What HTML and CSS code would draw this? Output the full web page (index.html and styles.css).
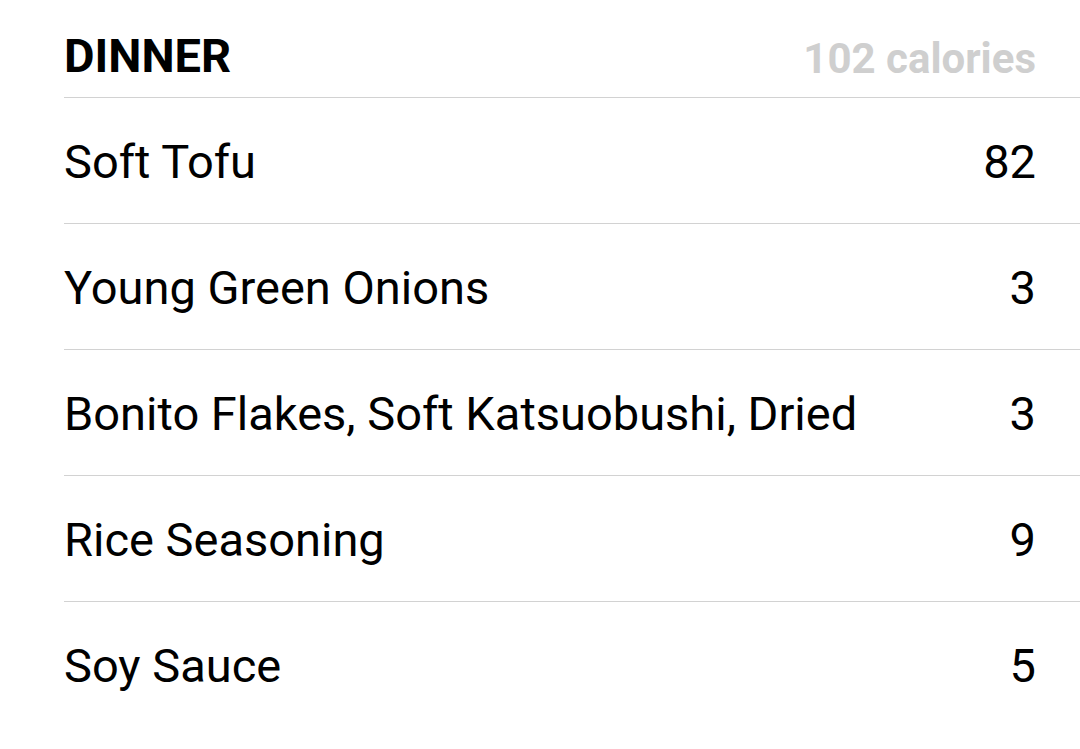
FILE: index.html
```html
<!DOCTYPE html>
<html>
<head>
<meta charset="utf-8">
<link rel="stylesheet" href="styles.css">
</head>
<body>
<div class="meal">
  <div class="meal-header">
    <span class="meal-title">DINNER</span>
    <span class="meal-total">102 calories</span>
  </div>
  <div class="item"><span class="item-name">Soft Tofu</span><span class="item-cal">82</span></div>
  <div class="item"><span class="item-name">Young Green Onions</span><span class="item-cal">3</span></div>
  <div class="item"><span class="item-name">Bonito Flakes, Soft Katsuobushi, Dried</span><span class="item-cal">3</span></div>
  <div class="item"><span class="item-name">Rice Seasoning</span><span class="item-cal">9</span></div>
  <div class="item last"><span class="item-name">Soy Sauce</span><span class="item-cal">5</span></div>
</div>
</body>
</html>
```
FILE: styles.css
```css
html, body {
  margin: 0;
  padding: 0;
  background: #ffffff;
}
body {
  font-family: Roboto, "Liberation Sans", sans-serif;
  color: #000;
  width: 1080px;
  height: 749px;
  overflow: hidden;
}
.meal {
  padding-left: 64px;
}
.meal-header {
  box-sizing: border-box;
  height: 98px;
  display: flex;
  justify-content: space-between;
  align-items: baseline;
  padding: 28px 44px 0 0;
  line-height: 56px;
  border-bottom: 1px solid #d2d2d2;
}
.meal-title {
  font-size: 47px;
  font-weight: 700;
}
.meal-total {
  font-size: 42px;
  font-weight: 700;
  color: #cfcfcf;
  position: relative;
  top: 1px;
}
.item {
  display: flex;
  justify-content: space-between;
  padding: 3px 44px 0 0;
  line-height: 122px;
  font-size: 47px;
  border-bottom: 1px solid #d2d2d2;
}
.item.last {
  border-bottom: none;
}
```
